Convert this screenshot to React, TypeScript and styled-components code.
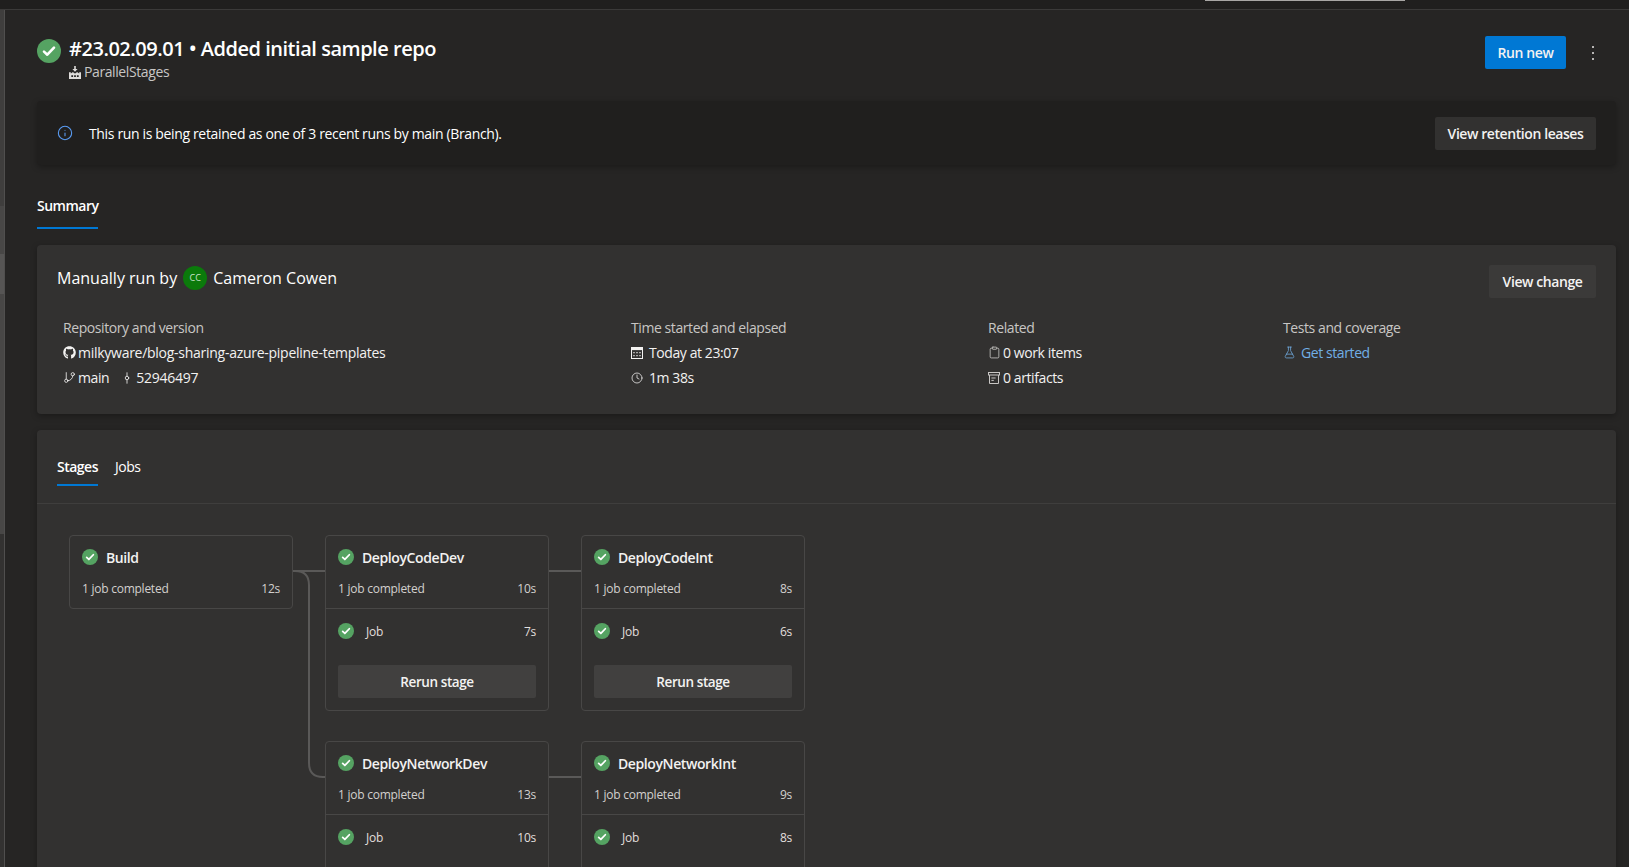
import React from "react";
import styled, { createGlobalStyle } from "styled-components";
import { Info, Clock, Clipboard, FlaskConical, GitBranch, GitCommitVertical } from "lucide-react";
import { FaGithub } from "react-icons/fa";

const GlobalStyle = createGlobalStyle`
  html, body {
    margin: 0;
    height: 100%;
    overflow: hidden;
    background: #262524;
  }
  body {
    font-family: "Open Sans", "Liberation Sans", sans-serif;
    font-size: 14px;
    color: #f3f2f1;
  }
`;

const Page = styled.div`
  display: flex;
  flex-direction: column;
  height: 867px;
  overflow: hidden;
`;

const TopBar = styled.div`
  flex: none;
  height: 9px;
  background: #201f1e;
  border-bottom: 1px solid #3b3a39;
  padding-left: 1205px;
`;

const TopMark = styled.div`
  width: 200px;
  height: 1px;
  background: #a8a6a4;
`;

const Body = styled.div`
  flex: 1;
  display: flex;
  min-height: 0;
`;

const Strip = styled.div`
  flex: none;
  width: 4px;
  display: flex;
  flex-direction: column;
  border-right: 1px solid #504f4e;
`;

const StripBand = styled.div<{ $h: number; $c: string }>`
  height: ${(p) => p.$h}px;
  background: ${(p) => p.$c};
`;

const Main = styled.div`
  flex: 1;
  min-width: 0;
  padding: 26px 13px 0 32px;
`;

const Header = styled.div`
  display: flex;
  height: 33px;
`;

const TitleIcon = styled.div`
  flex: none;
  width: 24px;
  height: 24px;
  margin-top: 3px;
  margin-right: 8px;
`;

const TitleBlock = styled.div`
  flex: 1;
  margin-top: -1px;
`;

const Title = styled.div`
  font-size: 20px;
  font-weight: 600;
  line-height: 28px;
  color: #fff;
  letter-spacing: -0.47px;
`;

const PipelineName = styled.div`
  display: flex;
  align-items: center;
  gap: 3px;
  font-size: 14px;
  line-height: 20px;
  margin-top: -1px;
  color: #c8c6c4;
  letter-spacing: -0.4px;
`;

const Button = styled.button<{ $bg?: string; $w: number }>`
  flex: none;
  width: ${(p) => p.$w}px;
  height: 33px;
  padding: 0;
  border: none;
  border-radius: 2px;
  background: ${(p) => p.$bg || "#323130"};
  color: #f3f2f1;
  font: 600 14px "Open Sans", "Liberation Sans", sans-serif;
  letter-spacing: -0.42px;
`;

const MoreButton = styled.div`
  flex: none;
  width: 50px;
  height: 33px;
  padding-left: 4px;
  box-sizing: border-box;
  display: flex;
  align-items: center;
  justify-content: center;
`;

const Dots = styled.div`
  display: flex;
  flex-direction: column;
  gap: 4px;
`;

const Dot = styled.span`
  width: 2px;
  height: 2px;
  background: #e8e6e4;
  border-radius: 50%;
`;

const Banner = styled.div`
  margin-top: 32px;
  height: 64px;
  display: flex;
  align-items: center;
  padding: 0 20px;
  background: #201f1e;
  border-radius: 4px;
  box-shadow: 0 2px 6px rgba(0, 0, 0, 0.3);
`;

const BannerText = styled.div`
  flex: 1;
  margin-left: 16px;
  font-size: 14px;
  letter-spacing: -0.35px;
  color: #fff;
`;

const TabRow = styled.div<{ $top: number }>`
  display: flex;
  gap: 17px;
  padding-top: ${(p) => p.$top}px;
`;

const Tab = styled.div<{ $active?: boolean; $pad: number }>`
  line-height: 20px;
  font-size: 14px;
  font-weight: ${(p) => (p.$active ? 600 : 400)};
  letter-spacing: -0.5px;
  padding-bottom: ${(p) => p.$pad}px;
  border-bottom: 2px solid ${(p) => (p.$active ? "#0078d4" : "transparent")};
  color: #fff;
`;

const Card = styled.div`
  margin-top: 16px;
  background: #323130;
  border-radius: 4px;
  box-shadow: 0 2px 6px rgba(0, 0, 0, 0.3);
`;

const SummaryCard = styled(Card)`
  height: 169px;
  padding: 20px 20px 0;
  box-sizing: border-box;
`;

const SummaryHead = styled.div`
  display: flex;
  justify-content: space-between;
  height: 33px;
`;

const RunBy = styled.div`
  display: flex;
  align-items: center;
  height: 25px;
  font-size: 16px;
  color: #fff;
`;

const Avatar = styled.div`
  width: 24px;
  height: 24px;
  border-radius: 50%;
  margin: 0 6px;
  background: #0b7a0b;
  color: #c9e3c9;
  font-size: 9px;
  line-height: 24px;
  text-align: center;
`;

const InfoGrid = styled.div`
  display: grid;
  grid-template-columns: 568px 357px 295px 1fr;
  margin-top: 18px;
  padding-left: 6px;
`;

const InfoCol = styled.div`
  display: flex;
  flex-direction: column;
`;

const InfoLabel = styled.div`
  height: 24px;
  line-height: 24px;
  letter-spacing: -0.42px;
  color: #c8c6c4;
`;

const InfoRow = styled.div<{ $link?: boolean }>`
  display: flex;
  align-items: center;
  height: 25px;
  letter-spacing: -0.41px;
  color: ${(p) => (p.$link ? "#71afe5" : "#f3f2f1")};
`;

const RepoName = styled.span`
  letter-spacing: -0.27px;
`;

const RowIcon = styled.span<{ $w: number; $muted?: boolean }>`
  flex: none;
  display: flex;
  align-items: center;
  width: ${(p) => p.$w}px;
  color: ${(p) => (p.$muted ? "#c8c6c4" : "inherit")};
`;

const CommitIcon = styled(RowIcon)`
  margin-left: 11px;
`;

const StagesCard = styled(Card)`
  height: 520px;
`;

const StagesHead = styled.div`
  padding: 0 20px 17px;
  border-bottom: 1px solid #3f3e3d;
`;

const Diagram = styled.div`
  position: relative;
  display: flex;
  gap: 32px;
  padding: 31px 0 0 32px;
`;

const Connectors = styled.svg`
  position: absolute;
  left: 0;
  top: 0;
  pointer-events: none;
`;

const StageColumn = styled.div`
  display: flex;
  flex-direction: column;
  gap: 30px;
  width: 224px;
`;

const StageCard = styled.div`
  box-sizing: border-box;
  width: 224px;
  border: 1px solid #484746;
  border-radius: 4px;
`;

const StageHead = styled.div`
  padding: 11px 12px 11px;
`;

const StageTitle = styled.div`
  display: flex;
  align-items: center;
  height: 20px;
  gap: 8px;
  font-size: 14px;
  font-weight: 600;
  letter-spacing: -0.4px;
  color: #f3f2f1;
`;

const StageMeta = styled.div`
  display: flex;
  justify-content: space-between;
  margin-top: 14px;
  line-height: 16px;
  font-size: 12px;
  letter-spacing: -0.25px;
  color: #d2d0ce;
`;

// same height with or without the button, the lower cards run past the fold
const JobList = styled.div`
  min-height: 77px;
  padding: 12px;
  border-top: 1px solid #484746;
`;

const JobRow = styled.div`
  display: flex;
  align-items: center;
  height: 20px;
  font-size: 12px;
  letter-spacing: -0.25px;
  color: #e1dfdd;
`;

const JobName = styled.span`
  flex: 1;
  margin-left: 12px;
`;

const RerunButton = styled(Button)`
  display: block;
  width: 100%;
  margin-top: 24px;
  background: #41403f;
  font-size: 13.5px;
`;

const StatusIcon = ({ size }: { size: number }) => (
  <svg width={size} height={size} viewBox="0 0 24 24" style={{ flex: "none" }}>
    <circle cx="12" cy="12" r="12" fill="#55a362" />
    <path d="M7 12.6l3.3 3.1L17 8.6" fill="none" stroke="#fff" strokeWidth="2.6" strokeLinecap="round" strokeLinejoin="round" />
  </svg>
);

const PipelineIcon = () => (
  <svg width="12" height="13" viewBox="0 0 12 13">
    <path d="M5.2 0h1.6v3h1.8L6 5.8 3.4 3h1.8z" fill="#dedcda" />
    <path d="M0 13V6.2h1.8v1.4L4 6l1.2 1.2h1.6L8 6l2.2 1.6V6.2H12V13z" fill="#dedcda" />
    <path d="M2.3 9.2h1.8V11H2.3zM5.1 9.2h1.8V11H5.1zM7.9 9.2h1.8V11H7.9z" fill="#262524" />
  </svg>
);

const CalendarIcon = () => (
  <svg width="12" height="12" viewBox="0 0 12 12">
    <rect x="0.5" y="0.5" width="11" height="11" fill="none" stroke="#f3f2f1" />
    <rect x="0.5" y="0.5" width="11" height="2.6" fill="#f3f2f1" />
    <path d="M2.4 5h1.2v1.2H2.4zM5.4 5h1.2v1.2H5.4zM8.4 5h1.2v1.2H8.4zM2.4 8h1.2v1.2H2.4zM5.4 8h1.2v1.2H5.4zM8.4 8h1.2v1.2H8.4z" fill="#f3f2f1" />
  </svg>
);

const ArtifactIcon = () => (
  <svg width="12" height="12" viewBox="0 0 12 12" fill="none" stroke="#c8c6c4">
    <rect x="0.5" y="0.5" width="11" height="2.5" />
    <path d="M1.5 3v8.5h9V3" />
    <path d="M3.4 6h4.2M3.4 8.4h2.4" />
  </svg>
);

// the second row's rerun buttons sit below the fold, so only the first row draws them
const stageColumns = [
  [{ name: "Build", total: "12s" }],
  [
    { name: "DeployCodeDev", total: "10s", job: "7s", rerun: true },
    { name: "DeployNetworkDev", total: "13s", job: "10s" },
  ],
  [
    { name: "DeployCodeInt", total: "8s", job: "6s", rerun: true },
    { name: "DeployNetworkInt", total: "9s", job: "8s" },
  ],
];

const Stage = ({ name, total, job, rerun }: { name: string; total: string; job?: string; rerun?: boolean }) => (
  <StageCard>
    <StageHead>
      <StageTitle>
        <StatusIcon size={16} />
        {name}
      </StageTitle>
      <StageMeta>
        <span>1 job completed</span>
        <span>{total}</span>
      </StageMeta>
    </StageHead>
    {job && (
      <JobList>
        <JobRow>
          <StatusIcon size={16} />
          <JobName>Job</JobName>
          <span>{job}</span>
        </JobRow>
        {rerun && <RerunButton $w={198}>Rerun stage</RerunButton>}
      </JobList>
    )}
  </StageCard>
);

const App = () => (
  <Page>
    <GlobalStyle />
    <TopBar>
      <TopMark />
    </TopBar>
    <Body>
      <Strip>
        <StripBand $h={196} $c="#3f3e3d" />
        <StripBand $h={48} $c="#484746" />
        <StripBand $h={40} $c="#565554" />
        <StripBand $h={240} $c="#484746" />
        <StripBand $h={333} $c="#333231" />
      </Strip>
      <Main>
        <Header>
          <TitleIcon>
            <StatusIcon size={24} />
          </TitleIcon>
          <TitleBlock>
            <Title>#23.02.09.01 • Added initial sample repo</Title>
            <PipelineName>
              <PipelineIcon />
              ParallelStages
            </PipelineName>
          </TitleBlock>
          <Button $bg="#0078d4" $w={81}>
            Run new
          </Button>
          <MoreButton>
            <Dots>
              <Dot />
              <Dot />
              <Dot />
            </Dots>
          </MoreButton>
        </Header>

        <Banner>
          <Info size={16} strokeWidth={1.6} color="#5a9df5" />
          <BannerText>This run is being retained as one of 3 recent runs by main (Branch).</BannerText>
          <Button $w={161}>View retention leases</Button>
        </Banner>

        <TabRow $top={31}>
          <Tab $active $pad={11}>
            Summary
          </Tab>
        </TabRow>

        <SummaryCard>
          <SummaryHead>
            <RunBy>
              Manually run by
              <Avatar>CC</Avatar>
              Cameron Cowen
            </RunBy>
            <Button $bg="#3b3a39" $w={107}>
              View change
            </Button>
          </SummaryHead>
          <InfoGrid>
            <InfoCol>
              <InfoLabel>Repository and version</InfoLabel>
              <InfoRow>
                <RowIcon $w={15}>
                  <FaGithub size={13} />
                </RowIcon>
                <RepoName>milkyware/blog-sharing-azure-pipeline-templates</RepoName>
              </InfoRow>
              <InfoRow>
                <RowIcon $w={15}>
                  <GitBranch size={13} strokeWidth={1.5} />
                </RowIcon>
                main
                <CommitIcon $w={16}>
                  <GitCommitVertical size={14} strokeWidth={1.4} />
                </CommitIcon>
                <RepoName>52946497</RepoName>
              </InfoRow>
            </InfoCol>
            <InfoCol>
              <InfoLabel>Time started and elapsed</InfoLabel>
              <InfoRow>
                <RowIcon $w={18}>
                  <CalendarIcon />
                </RowIcon>
                Today at 23:07
              </InfoRow>
              <InfoRow>
                <RowIcon $w={18}>
                  <Clock size={12} strokeWidth={1.5} />
                </RowIcon>
                1m 38s
              </InfoRow>
            </InfoCol>
            <InfoCol>
              <InfoLabel>Related</InfoLabel>
              <InfoRow>
                <RowIcon $w={15} $muted>
                  <Clipboard size={13} strokeWidth={1.5} />
                </RowIcon>
                0 work items
              </InfoRow>
              <InfoRow>
                <RowIcon $w={15} $muted>
                  <ArtifactIcon />
                </RowIcon>
                0 artifacts
              </InfoRow>
            </InfoCol>
            <InfoCol>
              <InfoLabel>Tests and coverage</InfoLabel>
              <InfoRow $link>
                <RowIcon $w={18}>
                  <FlaskConical size={13} strokeWidth={1.4} />
                </RowIcon>
                Get started
              </InfoRow>
            </InfoCol>
          </InfoGrid>
        </SummaryCard>

        <StagesCard>
          <StagesHead>
            <TabRow $top={27}>
              <Tab $active $pad={7}>
                Stages
              </Tab>
              <Tab $pad={7}>Jobs</Tab>
            </TabRow>
          </StagesHead>
          <Diagram>
            <Connectors width="800" height="300">
              <path
                d="M256 67H258Q272 67 272 81V259Q272 273 286 273H288M256 67H288M512 67H544M512 273H544"
                fill="none"
                stroke="#5a5958"
                strokeWidth="2"
              />
            </Connectors>
            {stageColumns.map((column, i) => (
              <StageColumn key={i}>
                {column.map((stage) => (
                  <Stage key={stage.name} {...stage} />
                ))}
              </StageColumn>
            ))}
          </Diagram>
        </StagesCard>
      </Main>
    </Body>
  </Page>
);

export default App;
